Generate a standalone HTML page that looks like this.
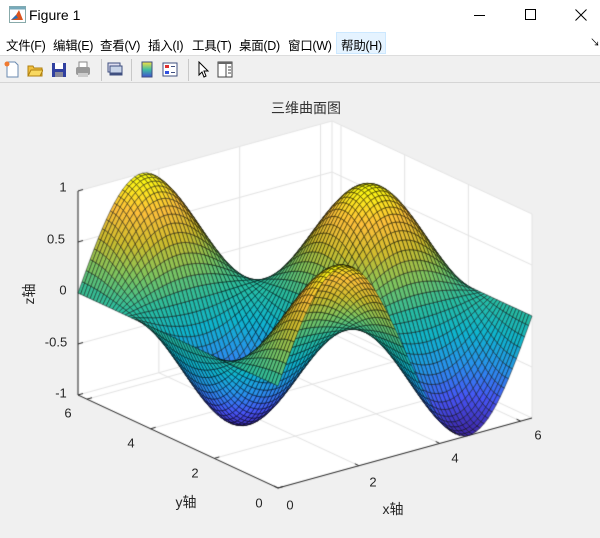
<!DOCTYPE html>
<html><head><meta charset="utf-8">
<style>
*{margin:0;padding:0;box-sizing:border-box}
body{width:600px;height:538px;background:#f0f0f0;position:relative;overflow:hidden;font-family:"Liberation Sans","Noto Sans CJK SC",sans-serif;color:#262626}
.t{position:absolute;white-space:nowrap}
#title{position:absolute;left:0;top:0;width:600px;height:31px;background:#fff}
#menu{position:absolute;left:0;top:31px;width:600px;height:24px;background:#fff;font-size:12.5px;color:#000}
#menu span{position:absolute;top:4px;letter-spacing:-0.3px}
#tb{position:absolute;left:0;top:55px;width:600px;height:28px;background:#f0f0f0;border-top:1px solid #ddd;border-bottom:1px solid #d5d5d5}
.ic{position:absolute;top:5px;width:16px;height:17px}
.sep{position:absolute;top:3px;width:1px;height:22px;background:#c8c8c8}
.tk{position:absolute;font-size:13px;transform:translate(-50%,-50%);color:#262626}
canvas{position:absolute;left:0;top:0}
</style></head><body>
<div id="title">
 <svg style="position:absolute;left:9px;top:6px" width="17" height="17" viewBox="0 0 17 17"><rect x="0.5" y="0.5" width="16" height="16" fill="#fff" stroke="#8aa"/><rect x="0.5" y="0.5" width="16" height="3" fill="#7ab"/><path d="M2 14 L7 9 L10 4 L14 14 Z" fill="#d9541e"/><path d="M2 14 L7 9 L9 12 Z" fill="#2a6fb5"/></svg>
 <span class="t" style="left:29px;top:7px;font-size:14px;color:#000">Figure 1</span>
 <div style="position:absolute;left:474px;top:15px;width:11px;height:1px;background:#000"></div>
 <div style="position:absolute;left:525px;top:9px;width:11px;height:11px;border:1px solid #000"></div>
 <svg style="position:absolute;left:575px;top:9px" width="12" height="12"><path d="M0.5 0.5L11.5 11.5M11.5 0.5L0.5 11.5" stroke="#000" stroke-width="1"/></svg>
</div>
<div id="menu">
 <span style="left:6px">文件(F)</span><span style="left:53px">编辑(E)</span><span style="left:100px">查看(V)</span><span style="left:148px">插入(I)</span><span style="left:192px">工具(T)</span><span style="left:239px">桌面(D)</span><span style="left:288px">窗口(W)</span>
 <div style="position:absolute;left:336px;top:1px;width:50px;height:22px;background:#e5f3ff;border:1px solid #cce8ff"></div>
 <span style="left:341px">帮助(H)</span>
 <span style="left:590px;top:3px;font-size:10px">↘</span>
</div>
<div id="tb">
 <svg class="ic" style="left:4px" viewBox="0 0 16 17"><path d="M3 1h8l3 3v12H3z" fill="#fff" stroke="#6a8ab0"/><circle cx="3" cy="3" r="2.5" fill="#f07a30"/></svg>
 <svg class="ic" style="left:27px" viewBox="0 0 16 17"><path d="M1 5h5l1 2h8v8H1z" fill="#f0c040" stroke="#b08010"/><path d="M1 15l3-6h12l-3 6z" fill="#f8d860" stroke="#b08010"/></svg>
 <svg class="ic" style="left:51px" viewBox="0 0 16 17"><rect x="1" y="2" width="14" height="14" fill="#3040a0"/><rect x="4" y="2" width="8" height="6" fill="#fff"/><rect x="4" y="11" width="8" height="5" fill="#889"/></svg>
 <svg class="ic" style="left:75px" viewBox="0 0 16 17"><rect x="4" y="1" width="8" height="6" fill="#fff" stroke="#888"/><rect x="1" y="6" width="14" height="8" rx="2" fill="#999"/><rect x="3" y="12" width="10" height="4" fill="#ccc"/></svg>
 <div class="sep" style="left:101px"></div>
 <svg class="ic" style="left:107px" viewBox="0 0 16 17"><rect x="1" y="2" width="12" height="9" fill="#dde" stroke="#405080"/><rect x="3" y="5" width="12" height="9" fill="#c8d4e8" stroke="#405080"/><path d="M3 13h12" stroke="#405080" stroke-width="3"/></svg>
 <div class="sep" style="left:131px"></div>
 <svg class="ic" style="left:139px" viewBox="0 0 16 17"><defs><linearGradient id="g" x1="0" y1="0" x2="0" y2="1"><stop offset="0" stop-color="#f9e040"/><stop offset=".5" stop-color="#40c0a0"/><stop offset="1" stop-color="#4050d0"/></linearGradient></defs><rect x="3" y="1" width="10" height="15" fill="url(#g)" stroke="#405080"/></svg>
 <svg class="ic" style="left:162px" viewBox="0 0 16 17"><rect x="1" y="2" width="14" height="13" fill="#fff" stroke="#405080"/><rect x="3" y="4" width="4" height="3" fill="#e03030"/><rect x="3" y="10" width="4" height="3" fill="#3050e0"/><path d="M9 5.5h4M9 11.5h4" stroke="#405080"/></svg>
 <div class="sep" style="left:188px"></div>
 <svg class="ic" style="left:195px" viewBox="0 0 16 17"><path d="M4 1v13l3-3 2 5 2-1-2-5h4z" fill="#fff" stroke="#000"/></svg>
 <svg class="ic" style="left:217px" viewBox="0 0 16 17"><rect x="1" y="1" width="14" height="15" fill="#fff" stroke="#444"/><rect x="1" y="1" width="14" height="2" fill="#666"/><path d="M9 3v13" stroke="#444"/><path d="M11 6h3M11 9h3M11 12h3" stroke="#444"/></svg>
</div>
<canvas id="c" width="600" height="538"></canvas>
<div class="t" style="left:0;top:98px;width:612px;text-align:center;font-size:14px;color:#333">三维曲面图</div>
<div class="tk" style="left:63px;top:187px">1</div>
<div class="tk" style="left:56px;top:239px">0.5</div>
<div class="tk" style="left:63px;top:290px">0</div>
<div class="tk" style="left:56px;top:342px">-0.5</div>
<div class="tk" style="left:61px;top:393px">-1</div>
<div class="tk" style="left:68px;top:413px">6</div>
<div class="tk" style="left:131px;top:443px">4</div>
<div class="tk" style="left:195px;top:473px">2</div>
<div class="tk" style="left:259px;top:503px">0</div>
<div class="tk" style="left:290px;top:505px">0</div>
<div class="tk" style="left:373px;top:482px">2</div>
<div class="tk" style="left:455px;top:458px">4</div>
<div class="tk" style="left:538px;top:435px">6</div>
<div class="tk" style="left:186px;top:502px;font-size:14px">y轴</div>
<div class="tk" style="left:393px;top:509px;font-size:14px">x轴</div>
<div class="tk" style="left:29px;top:294px;font-size:14px;transform:translate(-50%,-50%) rotate(-90deg)">z轴</div>
<script>
var c=document.getElementById('c'),g=c.getContext('2d');
var T=2*Math.PI,ox=278,oy=488;
var ex=[254/T,-70/T],ey=[-200/T,-93/T],zs=102;
function P(x,y,z){return [ox+ex[0]*x+ey[0]*y, oy+ex[1]*x+ey[1]*y-zs*(z+1)];}
var pts=[P(0,T,-1),P(0,0,-1),P(T,0,-1),P(T,0,1),P(T,T,1),P(0,T,1)];
g.fillStyle='#fff';g.beginPath();pts.forEach(function(p,i){i?g.lineTo(p[0],p[1]):g.moveTo(p[0],p[1]);});g.closePath();g.fill();
function L(a,b,col,w){g.strokeStyle=col;g.lineWidth=w||1;g.beginPath();g.moveTo(a[0],a[1]);g.lineTo(b[0],b[1]);g.stroke();}
var gc='#e3e3e3';
[0,2,4,6].forEach(function(v){
 L(P(v,0,-1),P(v,T,-1),gc);L(P(v,T,-1),P(v,T,1),gc);
 L(P(0,v,-1),P(T,v,-1),gc);L(P(T,v,-1),P(T,v,1),gc);
});
[-1,-0.5,0,0.5,1].forEach(function(z){L(P(0,T,z),P(T,T,z),gc);L(P(T,T,z),P(T,0,z),gc);});
L(P(T,T,-1),P(T,T,1),gc);
var ac='#262626';
L(P(0,T,-1),P(0,T,1),ac);L(P(0,T,-1),P(0,0,-1),ac);L(P(0,0,-1),P(T,0,-1),ac);
[-1,-0.5,0,0.5,1].forEach(function(z){var p=P(0,T,z);L(p,[p[0]+5,p[1]-1.5],ac);});
[0,2,4,6].forEach(function(v){var p=P(v,0,-1);L(p,[p[0]-4,p[1]-2],ac);var q=P(0,v,-1);L(q,[q[0]+5,q[1]-1.5],ac);});
var cm=[[62,38,168],[70,85,245],[40,145,235],[15,180,205],[40,188,160],[125,196,95],[205,188,45],[252,190,58],[249,251,14]];
function col(t){t=Math.max(0,Math.min(1,t))*8;var i=Math.min(7,Math.floor(t)),f=t-i,a=cm[i],b=cm[i+1];
return 'rgb('+[0,1,2].map(function(k){return Math.round(a[k]+(b[k]-a[k])*f)}).join(',')+')';}
var N=[],s=0.1;for(var v=0;v<=T+1e-9;v+=s)N.push(v);N.push(T);
var n=N.length,q=[];
function Z(x,y){return Math.sin(x)*Math.cos(y);}
var vx=-0.527,vy=-0.687,vz=0.5;
for(var i=0;i<n-1;i++)for(var j=0;j<n-1;j++){
 var xs=[N[i],N[i+1],N[i+1],N[i]],ys=[N[j],N[j],N[j+1],N[j+1]];
 var zz=xs.map(function(x,k){return Z(x,ys[k]);});
 var mx=(xs[0]+xs[1])/2,my=(ys[0]+ys[2])/2,mz=(zz[0]+zz[1]+zz[2]+zz[3])/4;
 var d=vx*mx/T+vy*my/T+vz*(mz+1)/2;
 q.push({xs:xs,ys:ys,zz:zz,d:d,c:col((mz+1)/2)});
}
q.sort(function(a,b){return a.d-b.d;});
g.lineWidth=0.5;g.strokeStyle='rgba(0,0,0,0.9)';
q.forEach(function(o){g.beginPath();for(var k=0;k<4;k++){var p=P(o.xs[k],o.ys[k],o.zz[k]);k?g.lineTo(p[0],p[1]):g.moveTo(p[0],p[1]);}
g.closePath();g.fillStyle=o.c;g.fill();g.stroke();});
</script>
</body></html>
